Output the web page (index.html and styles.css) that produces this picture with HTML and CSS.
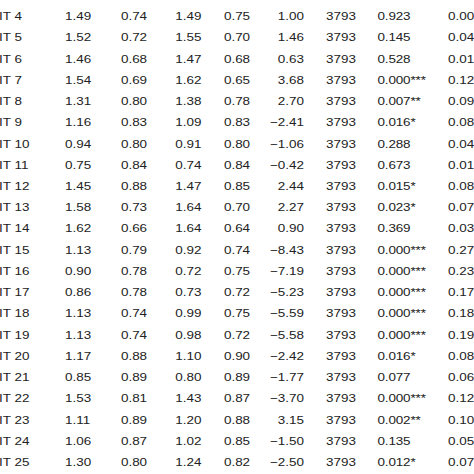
FILE: index.html
```html
<!DOCTYPE html>
<html>
<head>
<meta charset="utf-8">
<link rel="stylesheet" href="styles.css">
</head>
<body>
<div class="sheet">
  <div class="row"><span class="c1">IT 4</span><span class="c2">1.49</span><span class="c3">0.74</span><span class="c4">1.49</span><span class="c5">0.75</span><span class="c6">1.00</span><span class="c7">3793</span><span class="c8">0.923</span><span class="c9">0.00</span></div>
  <div class="row"><span class="c1">IT 5</span><span class="c2">1.52</span><span class="c3">0.72</span><span class="c4">1.55</span><span class="c5">0.70</span><span class="c6">1.46</span><span class="c7">3793</span><span class="c8">0.145</span><span class="c9">0.04</span></div>
  <div class="row"><span class="c1">IT 6</span><span class="c2">1.46</span><span class="c3">0.68</span><span class="c4">1.47</span><span class="c5">0.68</span><span class="c6">0.63</span><span class="c7">3793</span><span class="c8">0.528</span><span class="c9">0.01</span></div>
  <div class="row"><span class="c1">IT 7</span><span class="c2">1.54</span><span class="c3">0.69</span><span class="c4">1.62</span><span class="c5">0.65</span><span class="c6">3.68</span><span class="c7">3793</span><span class="c8">0.000***</span><span class="c9">0.12</span></div>
  <div class="row"><span class="c1">IT 8</span><span class="c2">1.31</span><span class="c3">0.80</span><span class="c4">1.38</span><span class="c5">0.78</span><span class="c6">2.70</span><span class="c7">3793</span><span class="c8">0.007**</span><span class="c9">0.09</span></div>
  <div class="row"><span class="c1">IT 9</span><span class="c2">1.16</span><span class="c3">0.83</span><span class="c4">1.09</span><span class="c5">0.83</span><span class="c6">−2.41</span><span class="c7">3793</span><span class="c8">0.016*</span><span class="c9">0.08</span></div>
  <div class="row"><span class="c1">IT 10</span><span class="c2">0.94</span><span class="c3">0.80</span><span class="c4">0.91</span><span class="c5">0.80</span><span class="c6">−1.06</span><span class="c7">3793</span><span class="c8">0.288</span><span class="c9">0.04</span></div>
  <div class="row"><span class="c1">IT 11</span><span class="c2">0.75</span><span class="c3">0.84</span><span class="c4">0.74</span><span class="c5">0.84</span><span class="c6">−0.42</span><span class="c7">3793</span><span class="c8">0.673</span><span class="c9">0.01</span></div>
  <div class="row"><span class="c1">IT 12</span><span class="c2">1.45</span><span class="c3">0.88</span><span class="c4">1.47</span><span class="c5">0.85</span><span class="c6">2.44</span><span class="c7">3793</span><span class="c8">0.015*</span><span class="c9">0.08</span></div>
  <div class="row"><span class="c1">IT 13</span><span class="c2">1.58</span><span class="c3">0.73</span><span class="c4">1.64</span><span class="c5">0.70</span><span class="c6">2.27</span><span class="c7">3793</span><span class="c8">0.023*</span><span class="c9">0.07</span></div>
  <div class="row"><span class="c1">IT 14</span><span class="c2">1.62</span><span class="c3">0.66</span><span class="c4">1.64</span><span class="c5">0.64</span><span class="c6">0.90</span><span class="c7">3793</span><span class="c8">0.369</span><span class="c9">0.03</span></div>
  <div class="row"><span class="c1">IT 15</span><span class="c2">1.13</span><span class="c3">0.79</span><span class="c4">0.92</span><span class="c5">0.74</span><span class="c6">−8.43</span><span class="c7">3793</span><span class="c8">0.000***</span><span class="c9">0.27</span></div>
  <div class="row"><span class="c1">IT 16</span><span class="c2">0.90</span><span class="c3">0.78</span><span class="c4">0.72</span><span class="c5">0.75</span><span class="c6">−7.19</span><span class="c7">3793</span><span class="c8">0.000***</span><span class="c9">0.23</span></div>
  <div class="row"><span class="c1">IT 17</span><span class="c2">0.86</span><span class="c3">0.78</span><span class="c4">0.73</span><span class="c5">0.72</span><span class="c6">−5.23</span><span class="c7">3793</span><span class="c8">0.000***</span><span class="c9">0.17</span></div>
  <div class="row"><span class="c1">IT 18</span><span class="c2">1.13</span><span class="c3">0.74</span><span class="c4">0.99</span><span class="c5">0.75</span><span class="c6">−5.59</span><span class="c7">3793</span><span class="c8">0.000***</span><span class="c9">0.18</span></div>
  <div class="row"><span class="c1">IT 19</span><span class="c2">1.13</span><span class="c3">0.74</span><span class="c4">0.98</span><span class="c5">0.72</span><span class="c6">−5.58</span><span class="c7">3793</span><span class="c8">0.000***</span><span class="c9">0.19</span></div>
  <div class="row"><span class="c1">IT 20</span><span class="c2">1.17</span><span class="c3">0.88</span><span class="c4">1.10</span><span class="c5">0.90</span><span class="c6">−2.42</span><span class="c7">3793</span><span class="c8">0.016*</span><span class="c9">0.08</span></div>
  <div class="row"><span class="c1">IT 21</span><span class="c2">0.85</span><span class="c3">0.89</span><span class="c4">0.80</span><span class="c5">0.89</span><span class="c6">−1.77</span><span class="c7">3793</span><span class="c8">0.077</span><span class="c9">0.06</span></div>
  <div class="row"><span class="c1">IT 22</span><span class="c2">1.53</span><span class="c3">0.81</span><span class="c4">1.43</span><span class="c5">0.87</span><span class="c6">−3.70</span><span class="c7">3793</span><span class="c8">0.000***</span><span class="c9">0.12</span></div>
  <div class="row"><span class="c1">IT 23</span><span class="c2">1.11</span><span class="c3">0.89</span><span class="c4">1.20</span><span class="c5">0.88</span><span class="c6">3.15</span><span class="c7">3793</span><span class="c8">0.002**</span><span class="c9">0.10</span></div>
  <div class="row"><span class="c1">IT 24</span><span class="c2">1.06</span><span class="c3">0.87</span><span class="c4">1.02</span><span class="c5">0.85</span><span class="c6">−1.50</span><span class="c7">3793</span><span class="c8">0.135</span><span class="c9">0.05</span></div>
  <div class="row"><span class="c1">IT 25</span><span class="c2">1.30</span><span class="c3">0.80</span><span class="c4">1.24</span><span class="c5">0.82</span><span class="c6">−2.50</span><span class="c7">3793</span><span class="c8">0.012*</span><span class="c9">0.07</span></div>
</div>
</body>
</html>
```

FILE: styles.css
```css
html, body {
  margin: 0;
  padding: 0;
  background: #ffffff;
  overflow: hidden;
  width: 474px;
  height: 474px;
}

.sheet {
  padding-top: 6.1px;
  margin-left: -0.85px;
  font-family: "Liberation Sans", Arial, sans-serif;
  font-size: 11.4px;
  line-height: 21.24px;
  color: #222222;
  transform: scaleX(1.18);
  transform-origin: 0 0;
  width: 420px;
}

.row {
  display: grid;
  grid-template-columns: 55.95px 47.4px 46.1px 41.2px 30px 56.5px 43.6px 59.8px 60px;
  white-space: nowrap;
}

.c6 {
  text-align: right;
  padding-right: 18.7px;
}

.c8 {
  letter-spacing: -0.1px;
}
```
